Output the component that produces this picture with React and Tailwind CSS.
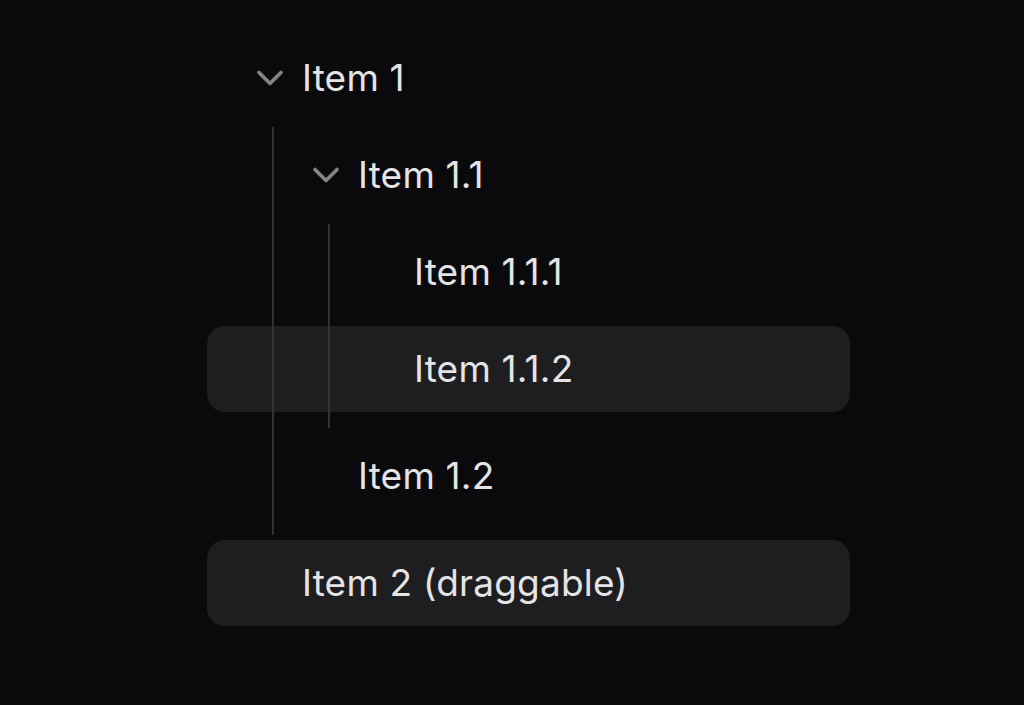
import React from 'react';
import { ChevronDown } from 'lucide-react';

// tree data, expanded as in the picture
const TREE = [
  {
    id: '1',
    label: 'Item 1',
    children: [
      {
        id: '1.1',
        label: 'Item 1.1',
        children: [
          { id: '1.1.1', label: 'Item 1.1.1' },
          { id: '1.1.2', label: 'Item 1.1.2', active: true },
        ],
      },
      { id: '1.2', label: 'Item 1.2' },
    ],
  },
  { id: '2', label: 'Item 2 (draggable)', active: true },
];

const INDENT = ['pl-[41px]', 'pl-[97px]', 'pl-[153px]'];
const GUIDE = ['left-[65px]', 'left-[121px]', 'left-[177px]'];

const Node = ({ node, depth }) => {
  const hasChildren = node.children && node.children.length > 0;
  return (
    <div className="flex flex-col">
      <div
        className={`h-[86px] mb-[6px] flex items-center gap-[10px] rounded-[18px] pr-6 ${INDENT[depth]} ${
          node.active ? 'bg-[#1e1e20]' : ''
        }`}
      >
        <span className="w-[44px] h-[44px] flex items-center justify-center text-[#858587]">
          {hasChildren && <ChevronDown size={44} strokeWidth={2} />}
        </span>
        <span className="text-[37px] leading-none text-[#e4e4e7] tracking-[0.2px] -mt-[1px]">{node.label}</span>
      </div>

      {hasChildren && (
        <div className="relative flex flex-col gap-[5px] pt-[5px] pb-[10px]">
          {node.children.map((child) => (
            <Node key={child.id} node={child} depth={depth + 1} />
          ))}
          {/* guide line, over the rows */}
          <span className={`absolute z-10 top-0 bottom-0 w-[2px] bg-[#333336] ${GUIDE[depth]}`}></span>
        </div>
      )}
    </div>
  );
};

export default function App() {
  return (
    <div
      className="min-h-[705px] w-full bg-[#0a0a0c] pt-[35px]"
      style={{ fontFamily: 'Inter, "Noto Sans", sans-serif' }}
    >
      <div className="ml-[207px] w-[643px] flex flex-col gap-[5px]">
        {TREE.map((node) => (
          <Node key={node.id} node={node} depth={0} />
        ))}
      </div>
    </div>
  );
}
